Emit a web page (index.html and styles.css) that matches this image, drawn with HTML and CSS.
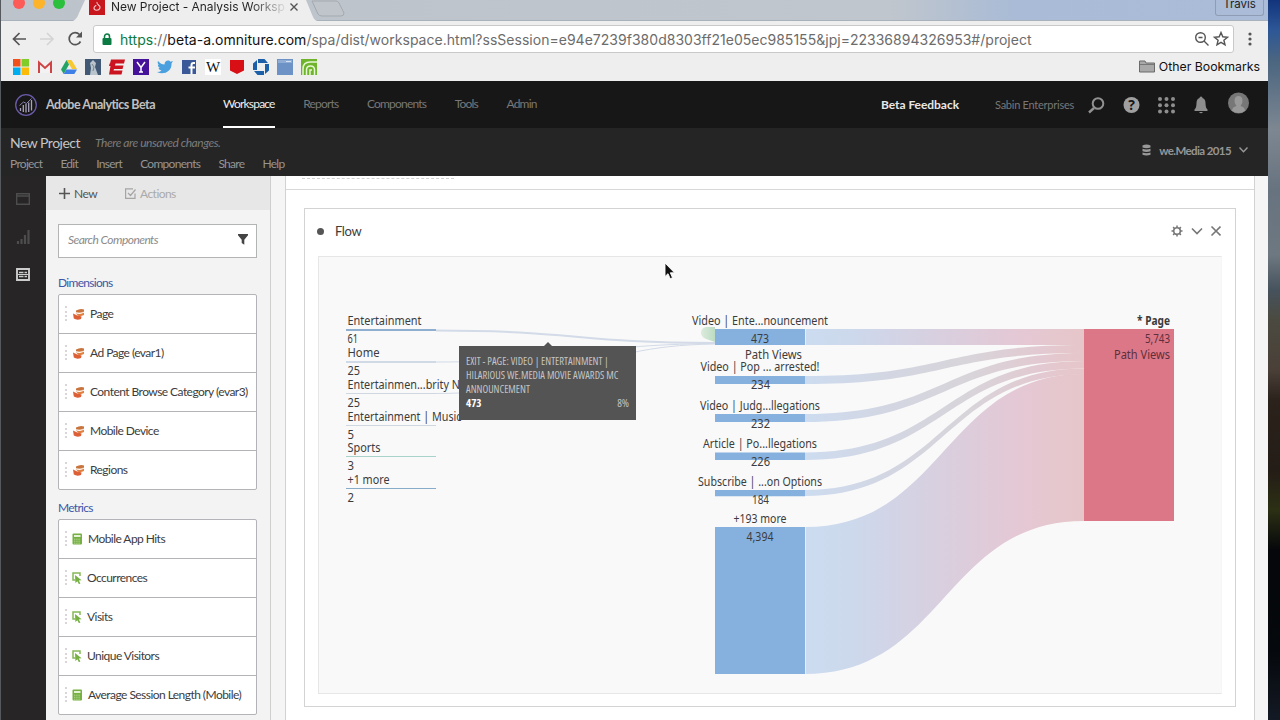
FILE: index.html
```
<!DOCTYPE html>
<html lang="en">
<head>
    <meta charset="UTF-8">
    <title>New Project - Analysis Workspace</title>
    <link rel="stylesheet" href="styles.css">
</head>
<body>
    <svg class="defs" width="0" height="0">
        <defs>
            <g id="icon-dimension">
                <path d="M3 2.6Q7 .2 11 1.4V4Q7 5.6 3 4.6z" fill="#c9743c"/>
                <path d="M2.6 5.2Q7 6.8 11 4.8V7Q8 8.6 5.6 8z" fill="#e2803f"/>
                <path d="M0 5.4Q3 7.4 8.6 8.6L8 11Q4 12.6 .8 10.6z" fill="#dd5f36"/>
                <path d="M3 4.600Q7 5.600 11 4" fill="none" stroke="#fff" stroke-width=".5"/>
            </g>
            <g id="icon-calc">
                <rect x=".5" y=".5" width="9.500" height="11" rx="1" fill="#76b043"/>
                <path d="M2 2h6.500v2H2z" fill="#e4f3d6"/>
                <path d="M2 6.2h6.500M2 8.2h6.500M2 10.2h6.500" stroke="#c3e2a4" stroke-width=".8" stroke-dasharray="1.4 .8"/>
            </g>
            <g id="icon-event">
                <path d="M3.4 8H1V1h7v3" fill="none" stroke="#86b95a" stroke-width="1.500"/>
                <path d="M3 3l6.600 5.200-2.800.3 1.600 3-1.500.7-1.500-3L3.400 11z" fill="#76b043"/>
            </g>
        </defs>
    </svg>

    <div class="browser">
        <!-- Tab strip -->
        <div class="tabstrip">
            <svg class="tab-shapes" width="1268" height="21" viewBox="0 0 1268 21">
                <circle cx="19" cy="3" r="6" fill="#fc5b57"/>
                <circle cx="39" cy="3" r="6" fill="#fdb32a"/>
                <circle cx="59" cy="3" r="6" fill="#2bc03c"/>
                <path d="M73 21Q77 19 79 13L85 0H306L313 17Q315 21 318 21z" fill="#eeeeee"/>
                <path d="M312 1H336Q338 1 339 3L344 13Q344 16 341 16H322Q319 16 318 14z" fill="#c0c5cb" stroke="#a4a9af"/>
                <path d="M89-1h16v16H89z" fill="#c8161d"/>
                <path d="M97 2c-1 3 4 3 3 6s-6 3-6 0c0-2 2-2 2-3" fill="none" stroke="#f7c9c9" stroke-width="1.100"/>
                <path d="M290.500 3.500l7 7m0-7l-7 7" stroke="#555" stroke-width="1.400"/>
            </svg>
            <span class="tab-title">New Project - Analysis Worksp</span>
            <span class="profile">Travis</span>
        </div>

        <!-- Address bar -->
        <div class="toolbar">
            <svg class="nav-icons" width="93" height="34" viewBox="0 0 93 34" fill="none" stroke-width="1.700">
                <path d="M26 18H14M19.500 12l-6 6 6 6" stroke="#555"/>
                <path d="M40 18h12M47 12l6 6-6 6" stroke="#d4d4d4"/>
                <path d="M80.500 20.500A6 6 0 1 1 79.500 13.500" stroke="#555"/>
                <path d="M82 10.500v6h-6z" fill="#555"/>
            </svg>
            <div class="address">
                <svg width="10" height="13" viewBox="0 0 10 13">
                    <rect x="0.500" y="5" width="9" height="7" rx="1" fill="#0b7a43"/>
                    <path d="M2.500 5V3.500a2.500 2.500 0 0 1 5 0V5" fill="none" stroke="#0b7a43" stroke-width="1.500"/>
                </svg>
                <span class="url"><span class="secure">https</span>://<b>beta-a.omniture.com</b>/spa/dist/workspace.html?ssSession=e94e7239f380d8303ff21e05ec985155&amp;jpj=22336894326953#/project</span>
                <svg class="address-icons" width="36" height="16" viewBox="0 0 36 16" fill="none" stroke="#555" stroke-width="1.400">
                    <circle cx="6.500" cy="6.500" r="4.800"/>
                    <path d="M10 10l4.500 4.500M4.500 6.500h4"/>
                    <path d="M27 1.500l1.800 4.300 4.700.4-3.600 3 1.100 4.600-4-2.500-4 2.500 1.100-4.600-3.600-3 4.700-.4z"/>
                </svg>
            </div>
            <svg class="kebab" width="6" height="16" viewBox="0 0 6 16" fill="#555">
                <circle cx="3" cy="3" r="1.600"/><circle cx="3" cy="8" r="1.600"/><circle cx="3" cy="13" r="1.600"/>
            </svg>
        </div>

        <!-- Bookmarks -->
        <div class="bookmarks">
            <svg viewBox="0 0 16 16"><path d="M0 0h7.500v7.500H0z" fill="#f1511b"/><path d="M8.500 0H16v7.500H8.500z" fill="#80cc28"/><path d="M0 8.500h7.500V16H0z" fill="#00adef"/><path d="M8.500 8.500H16V16H8.500z" fill="#fbbc09"/></svg>
            <svg viewBox="0 0 16 16"><path d="M1 3h14v11H1z" fill="#f2f2f2"/><path d="M2 14V3.500L8 9l6-5.500V14" fill="none" stroke="#cf4545" stroke-width="2"/></svg>
            <svg viewBox="0 0 16 16"><path d="M5.500 1h5L16 10h-5z" fill="#f8c832"/><path d="M5.500 1L0 10.500 2.700 15 8 5.500z" fill="#23a364"/><path d="M5.300 10.500H16L13.300 15H2.700z" fill="#3f7fe8"/></svg>
            <svg viewBox="0 0 16 16"><path d="M0 0h16v16H0z" fill="#415974"/><path d="M5 16l1-7-1-5 3-3 3 3-1 4 3 8z" fill="#b9c4cc"/><path d="M7 5l2 3-1 4" fill="none" stroke="#74858f"/></svg>
            <svg viewBox="0 0 16 16"><path d="M2 .5h14l-1 4H6.500L6 6.500h8.500l-1 3.500H5l-.5 1.500h9L12.500 15.500H0L1.500 7H0l.6-2.500H1z" fill="#cc1420"/></svg>
            <svg viewBox="0 0 16 16"><path d="M0 0h16v16H0z" fill="#44139a"/><path d="M4 3l4 5.500L12 3M8 8v5.500M6 13h4" fill="none" stroke="#fff" stroke-width="1.500"/></svg>
            <svg viewBox="0 0 16 16"><path d="M1 2q3 3.500 6.500 3.500C7.500 1 12 .5 13.500 2.700L16 2l-1.500 2.500C15 12 7 16.500 0 13q3 0 4.500-1.500Q2 11 1.500 9H3Q.8 8 .8 5.500L2 6Q0 4.500 1 2z" fill="#4aa0de"/></svg>
            <svg viewBox="0 0 16 16"><path d="M1 1h14v14H1z" fill="#3b5998"/><path d="M10.500 15V8M7.500 8.500H14M14 4h-1.500q-2 0-2 2v3" fill="none" stroke="#fff" stroke-width="2"/></svg>
            <svg viewBox="0 0 16 16"><path d="M0 0h16v16H0z" fill="#fff"/><text x="8" y="13" text-anchor="middle" class="wiki">W</text></svg>
            <svg viewBox="0 0 16 16"><path d="M1 1h14v10.500L8 15 1 11.500z" fill="#d90f16"/></svg>
            <svg viewBox="0 0 16 16" fill="#1b5fa9"><path d="M5 0h6.500L15 4H5zM16 5v6.500L12 15V5zM11 16H4.500L1 12h10zM0 11V4.500L4 1v10z"/></svg>
            <svg viewBox="0 0 16 16"><path d="M0 0h16v16H0z" fill="#6d93c6"/><path d="M1 1h14v3H1z" fill="#8fadd5"/><path d="M9 2.500h5" stroke="#d6e2f1"/></svg>
            <svg viewBox="0 0 16 16"><path d="M0 0h16v16H0z" fill="#6fb52c"/><path d="M2 16V10Q2 3 9 3h7M5.500 16v-5q0-4 4-4t4 4v5M9 16v-5h2" fill="none" stroke="#e7f5d8" stroke-width="1.500"/></svg>
            <div class="other">
                <svg viewBox="0 0 16 13"><path d="M.5 12V1H6l1 2h8.500v9z" fill="#a9a9a9" stroke="#6b6b6b"/><path d="M1 4.500h14" stroke="#777"/></svg>
                <span>Other Bookmarks</span>
            </div>
        </div>

        <!-- Analytics header -->
        <header class="header">
            <svg class="logo" width="22" height="22" viewBox="0 0 22 22" fill="none">
                <circle cx="11" cy="11" r="10.300" stroke="#6b5aa8" stroke-width="1.300"/>
                <path d="M5.500 17v-3M8.300 18v-7M11 18.500V10M13.700 18V8.500M16.500 16.500V6" stroke="#aaa2bd" stroke-width="1.300"/>
                <path d="M4.500 11.500l4-3.500 3 1.500 5-5" stroke="#8d82ad"/>
            </svg>
            <span class="brand">Adobe Analytics Beta</span>
            <nav class="main-nav">
                <a class="active">Workspace</a><a>Reports</a><a>Components</a><a>Tools</a><a>Admin</a>
            </nav>
            <span class="feedback">Beta Feedback</span>
            <span class="company">Sabin Enterprises</span>
            <svg class="header-icons" width="164" height="26" viewBox="0 0 164 26">
                <g fill="none" stroke="#919191" stroke-width="2"><circle cx="13" cy="12.500" r="5.300"/><path d="M9 17l-5 4.500" stroke-width="2.400"/></g>
                <circle cx="46.500" cy="14" r="8" fill="#a0a0a0"/>
                <text x="46.500" y="19" text-anchor="middle" class="help">?</text>
                <g fill="#8e8e8e">
                    <circle cx="75" cy="8" r="2"/><circle cx="81.500" cy="8" r="2"/><circle cx="88" cy="8" r="2"/>
                    <circle cx="75" cy="14.300" r="2"/><circle cx="81.500" cy="14.300" r="2"/><circle cx="88" cy="14.300" r="2"/>
                    <circle cx="75" cy="20.600" r="2"/><circle cx="81.500" cy="20.600" r="2"/><circle cx="88" cy="20.600" r="2"/>
                    <path d="M116 5.500q1.500 0 1.500 1.500 3 1 3 5 0 5 2 6.500v1.500h-13v-1.500q2-1.500 2-6.500 0-4 3-5 0-1.500 1.500-1.500zM114 21h4q-2 2.500-4 0z"/>
                </g>
                <circle cx="153.500" cy="12" r="10.500" fill="#777"/>
                <path d="M147 20q0-4 4.500-5-2.500-3-2-6 .5-4 4-4t4 4q.5 3-2 6 4.500 1 4.500 5-6 4-13 0z" fill="#999"/>
            </svg>
        </header>

        <!-- Project bar -->
        <div class="project-bar">
            <div>
                <div class="title-row"><span class="project-name">New Project</span><em>There are unsaved changes.</em></div>
                <div class="menu"><a>Project</a><a>Edit</a><a>Insert</a><a>Components</a><a>Share</a><a>Help</a></div>
            </div>
            <div class="suite">
                <svg width="9" height="12" viewBox="0 0 9 12" fill="#999"><path d="M.5 1.500q4-2 8 0v2q-4 1.500-8 0zM.5 4.800q4 1.500 8 0v2.400q-4 1.500-8 0zM.5 8.400q4 1.500 8 0v2.300q-4 1.500-8 0z"/></svg>
                <span>we.Media 2015</span>
                <svg width="9" height="6" viewBox="0 0 9 6" fill="none" stroke="#999" stroke-width="1.400"><path d="M.5.5l4 4.300 4-4.300"/></svg>
            </div>
        </div>

        <div class="workspace">
            <div class="rail">
                <svg width="14" height="12" viewBox="0 0 14 12" fill="none" stroke="#4d4d4d" stroke-width="1.400"><path d="M.7.7h12.600v10.600H.7zM1 3h12" /></svg>
                <svg width="14" height="15" viewBox="0 0 14 15" stroke="#4d4d4d" stroke-width="2.200"><path d="M2 15v-3M5.500 15v-5M9 15V6M12.500 15V1"/></svg>
                <svg width="14" height="13" viewBox="0 0 14 13" fill="none" stroke="#ccc"><path d="M1 1h12v11H1z" stroke-width="1.900"/><path d="M3 4.500h8M3 8.500h8" stroke-width="1.500" stroke-dasharray="4.500 1"/><path d="M2 6.500h10"/></svg>
            </div>

            <aside class="components">
                <div class="actions">
                    <svg width="11" height="11" viewBox="0 0 11 11" stroke="#555" stroke-width="1.600"><path d="M5.500 0v11M0 5.500h11"/></svg>
                    <span class="new">New</span>
                    <svg class="check" width="11" height="11" viewBox="0 0 11 11" fill="none" stroke="#a5a5a5" stroke-width="1.200"><path d="M10 5.500v4.900H.6V.9H8M3 5l2.500 2.500L10.500 1.500"/></svg>
                    <span class="disabled">Actions</span>
                </div>
                <div class="search">
                    <span>Search Components</span>
                    <svg width="10" height="11" viewBox="0 0 10 11" fill="#444"><path d="M0 0h10v1.200L6.300 5.800v5L3.700 9V5.800L0 1.200z"/></svg>
                </div>
                <h2>Dimensions</h2>
                <ul class="dimensions">
                    <li><i></i><svg viewBox="0 0 12 12"><use href="#icon-dimension"/></svg>Page</li>
                    <li><i></i><svg viewBox="0 0 12 12"><use href="#icon-dimension"/></svg>Ad Page (evar1)</li>
                    <li><i></i><svg viewBox="0 0 12 12"><use href="#icon-dimension"/></svg>Content Browse Category (evar3)</li>
                    <li><i></i><svg viewBox="0 0 12 12"><use href="#icon-dimension"/></svg>Mobile Device</li>
                    <li><i></i><svg viewBox="0 0 12 12"><use href="#icon-dimension"/></svg>Regions</li>
                </ul>
                <h2>Metrics</h2>
                <ul class="metrics">
                    <li class="calc"><i></i><svg viewBox="0 0 12 12"><use href="#icon-calc"/></svg>Mobile App Hits</li>
                    <li><i></i><svg viewBox="0 0 12 12"><use href="#icon-event"/></svg>Occurrences</li>
                    <li><i></i><svg viewBox="0 0 12 12"><use href="#icon-event"/></svg>Visits</li>
                    <li><i></i><svg viewBox="0 0 12 12"><use href="#icon-event"/></svg>Unique Visitors</li>
                    <li class="calc"><i></i><svg viewBox="0 0 12 12"><use href="#icon-calc"/></svg>Average Session Length (Mobile)</li>
                </ul>
            </aside>

            <main class="canvas">
                <div class="previous"><div class="dashes"></div></div>
                <section class="flow">
                    <div class="flow-head">
                        <span class="dot"></span>
                        <h3>Flow</h3>
                        <svg width="50" height="12" viewBox="0 0 50 12" fill="none" stroke="#767676" stroke-width="1.600">
                            <circle cx="6" cy="6" r="3.300"/>
                            <path d="M6 .5v2M6 9.500v2M.5 6h2M9.500 6h2M2.100 2.100l1.400 1.400M8.500 8.500l1.400 1.400M9.900 2.100L8.500 3.500M3.500 8.500L2.100 9.900" stroke-width="1.500"/>
                            <path d="M21 3.500l5 5 5-5M40.500 1.500l9 9m0-9l-9 9"/>
                        </svg>
                    </div>
                    <div class="chart">
                        <!-- viewBox keeps page units, 1 unit = 1px -->
                        <svg class="sankey" width="902" height="436" viewBox="319 257 902 436">
                            <defs>
                                <linearGradient id="ribbon" gradientUnits="userSpaceOnUse" x1="805" y1="0" x2="1084" y2="0">
                                    <stop offset="0" stop-color="#ccdcf0"/>
                                    <stop offset=".15" stop-color="#ccd9ed"/>
                                    <stop offset=".45" stop-color="#d7d0e0"/>
                                    <stop offset=".75" stop-color="#e4c8d5"/>
                                    <stop offset="1" stop-color="#e6c6c9"/>
                                </linearGradient>
                                <linearGradient id="thin" gradientUnits="userSpaceOnUse" x1="805" y1="0" x2="1084" y2="0">
                                    <stop offset="0" stop-color="#cddcf0"/>
                                    <stop offset=".3" stop-color="#d3d6e2"/>
                                    <stop offset=".6" stop-color="#d8d4d9"/>
                                    <stop offset=".85" stop-color="#e3c9d1"/>
                                    <stop offset="1" stop-color="#e6c6c9"/>
                                </linearGradient>
                                <linearGradient id="exit" x1="0" y1="0" x2="1" y2="0">
                                    <stop offset="0" stop-color="#dcebdd"/>
                                    <stop offset="1" stop-color="#bcdcc2"/>
                                </linearGradient>
                            </defs>

                            <!-- Flows into the page -->
                            <g fill="none" stroke="#d3dbe8">
                                <path d="M436 330.500C576 330.500 576 343 715 343" stroke-width="2"/>
                                <path d="M436 362C576 362 576 345 715 343.500"/>
                                <path d="M436 393.500C576 393.500 576 346 715 344"/>
                            </g>
                            <path d="M715 327H706Q701 328 701 333T709 340L715 342z" fill="url(#exit)"/>

                            <g fill="url(#ribbon)">
                                <path d="M805 329H1084V345H805z"/>
                                <path d="M805 527C944.500 527 944.500 374 1084 374V521C944.500 521 944.500 674 805 674z"/>
                            </g>
                            <g fill="url(#thin)">
                                <path d="M805 376C944.500 376 944.500 345 1084 345V353C944.500 353 944.500 384 805 384z"/>
                                <path d="M805 414C944.500 414 944.500 353 1084 353V361C944.500 361 944.500 422 805 422z"/>
                                <path d="M805 452.500C944.500 452.500 944.500 361 1084 361V368.500C944.500 368.500 944.500 460 805 460z"/>
                                <path d="M805 490C944.500 490 944.500 368.500 1084 368.500V374.500C944.500 374.500 944.500 496 805 496z"/>
                            </g>

                            <g fill="#86b1df">
                                <path d="M715 329h90v16h-90zM715 376h90v8h-90zM715 414h90v8h-90zM715 452.500h90v7.500h-90zM715 490h90v6.300h-90zM715 527h90v147h-90z"/>
                            </g>
                            <path d="M805.500 329v16M805.500 527v147" stroke="#e6edf6"/>
                            <path d="M1084 329h90v192h-90z" fill="#dc7788"/>

                            <g fill="none">
                                <path d="M346 330h90" stroke="#8fafd0" stroke-width="2"/>
                                <path d="M346 362h90" stroke="#c0cfdf" stroke-width="1.500"/>
                                <path d="M346 393.500h90M346 425.500h90" stroke="#cfd8e0"/>
                                <path d="M346 456.500h90" stroke="#a9d2cb"/>
                                <path d="M346 488.500h90" stroke="#87abc9" stroke-width="1.200"/>
                            </g>

                            <g class="label">
                                <text x="347.500" y="324.500" textLength="74" lengthAdjust="spacingAndGlyphs">Entertainment</text>
                                <text x="347.500" y="342.500" textLength="10.500" lengthAdjust="spacingAndGlyphs">61</text>
                                <text x="347.500" y="357" textLength="32" lengthAdjust="spacingAndGlyphs">Home</text>
                                <text x="347.500" y="375" textLength="12.500" lengthAdjust="spacingAndGlyphs">25</text>
                                <text x="347.500" y="389" textLength="132" lengthAdjust="spacingAndGlyphs">Entertainmen...brity News</text>
                                <text x="347.500" y="407" textLength="12.500" lengthAdjust="spacingAndGlyphs">25</text>
                                <text x="347.500" y="420.500" textLength="114" lengthAdjust="spacingAndGlyphs">Entertainment | Music</text>
                                <text x="347.500" y="438.500" textLength="6.500" lengthAdjust="spacingAndGlyphs">5</text>
                                <text x="347.500" y="452" textLength="33" lengthAdjust="spacingAndGlyphs">Sports</text>
                                <text x="347.500" y="470" textLength="6.500" lengthAdjust="spacingAndGlyphs">3</text>
                                <text x="347.500" y="483.500" textLength="42" lengthAdjust="spacingAndGlyphs">+1 more</text>
                                <text x="347.500" y="501.500" textLength="6.500" lengthAdjust="spacingAndGlyphs">2</text>
                            </g>
                            <g class="label">
                                <text x="692" y="324.500" textLength="136" lengthAdjust="spacingAndGlyphs">Video | Ente...nouncement</text>
                                <text x="751" y="342.500" textLength="18" lengthAdjust="spacingAndGlyphs">473</text>
                                <text x="745" y="358.500" textLength="57" lengthAdjust="spacingAndGlyphs">Path Views</text>
                                <text x="700.500" y="371" textLength="119" lengthAdjust="spacingAndGlyphs">Video | Pop ... arrested!</text>
                                <text x="751" y="389" textLength="19" lengthAdjust="spacingAndGlyphs">234</text>
                                <text x="700" y="409.500" textLength="120" lengthAdjust="spacingAndGlyphs">Video | Judg...llegations</text>
                                <text x="751" y="427.500" textLength="19" lengthAdjust="spacingAndGlyphs">232</text>
                                <text x="703" y="448" textLength="114" lengthAdjust="spacingAndGlyphs">Article | Po...llegations</text>
                                <text x="751" y="466" textLength="19" lengthAdjust="spacingAndGlyphs">226</text>
                                <text x="698" y="486" textLength="124" lengthAdjust="spacingAndGlyphs">Subscribe | ...on Options</text>
                                <text x="752" y="504" textLength="17" lengthAdjust="spacingAndGlyphs">184</text>
                                <text x="733.500" y="523" textLength="53" lengthAdjust="spacingAndGlyphs">+193 more</text>
                                <text x="746.500" y="541" textLength="27" lengthAdjust="spacingAndGlyphs">4,394</text>
                            </g>
                            <g class="label">
                                <text x="1137" y="324.500" textLength="33" lengthAdjust="spacingAndGlyphs" class="bold">* Page</text>
                                <text x="1145" y="342.500" textLength="25" lengthAdjust="spacingAndGlyphs" class="on-red">5,743</text>
                                <text x="1114" y="358.500" textLength="56" lengthAdjust="spacingAndGlyphs" class="on-red">Path Views</text>
                            </g>
                        </svg>

                        <div class="tooltip">
                            <p>EXIT - PAGE: VIDEO | ENTERTAINMENT |<br>HILARIOUS WE.MEDIA MOVIE AWARDS MC<br>ANNOUNCEMENT</p>
                            <div class="tooltip-values"><b>473</b><span>8%</span></div>
                        </div>
                    </div>
                </section>
            </main>
        </div>
    </div>

    <svg class="cursor" width="12" height="18" viewBox="0 0 12 18"><path d="M1 1v13.500l3-2.800 2.200 5 2.300-1-2.200-4.900h4.200z" fill="#111" stroke="#fff" stroke-width=".9"/></svg>
</body>
</html>
```
FILE: styles.css
```
* {
    box-sizing: border-box;
}
body {
    margin: 0;
    height: 720px;
    overflow: hidden;
    font-family: Lato, "Noto Sans", sans-serif;
    font-size: 12px;
    letter-spacing: -0.55px;
    color: #3c3c3c;
    background: linear-gradient(#12347c 0, #2d5796 30px, #4a6580 60px, #7d8791 130px, #67737f 190px, #6d7880 255px, #46525c 290px, #4b4a40 320px, #4a4038 370px, #2b221c 400px, #241c16 470px, #2c3014 510px, #05070a 550px, #05080c 650px, #141a24 720px);
}
.defs {
    position: absolute;
}
.browser {
    display: flex;
    flex-direction: column;
    width: 1268px;
    height: 720px;
    border-left: 1px solid #55585c;
    background: #fff;
}

/* browser window */
.tabstrip {
    position: relative;
    flex: none;
    display: flex;
    height: 21px;
    font-family: Inter, sans-serif;
    background: linear-gradient(90deg, #bcc3cb 0, #c0c6cd 70%, #a9bbd6 80%, #aabcd7 100%);
    border-bottom: 1px solid #a9b1ba;
}
.tab-shapes {
    position: absolute;
    left: -1px;
    top: 0;
}
.tab-title {
    position: relative;
    margin-left: 110px;
    width: 174px;
    height: 20px;
    overflow: hidden;
    white-space: nowrap;
    line-height: 14px;
    font-size: 12px;
    letter-spacing: -0.050px;
    color: transparent;
    background: linear-gradient(90deg, #222 80%, #ddd);
    background-clip: text;
}
.profile {
    margin-left: auto;
    margin-right: 4px;
    width: 49px;
    height: 16px;
    line-height: 8px;
    text-align: center;
    font-size: 11.500px;
    letter-spacing: 0;
    color: #222;
    border: 1px solid #8e9db3;
    border-top: 0;
    border-radius: 0 0 3px 3px;
}
.toolbar {
    flex: none;
    display: flex;
    align-items: center;
    height: 34px;
    background: #eee;
}
.nav-icons {
    flex: none;
    margin-left: -1px;
}
.address {
    display: flex;
    align-items: center;
    width: 1141px;
    height: 28px;
    margin-top: 2px;
    padding: 0 3px 0 8px;
    background: #fff;
    border: 1px solid #c9c9c9;
    border-radius: 3px;
}
.address svg {
    flex: none;
}
.url {
    margin-left: 8px;
    white-space: nowrap;
    font-family: Inter, sans-serif;
    font-size: 14px;
    letter-spacing: 0.020px;
    color: #6c6c6c;
}
.url b {
    font-weight: 400;
    color: #111;
}
.secure {
    color: #0b7a43;
}
.address-icons {
    margin-left: auto;
}
.kebab {
    margin: 2px 0 0 13px;
}
.bookmarks {
    flex: none;
    display: flex;
    align-items: center;
    gap: 8px;
    height: 26px;
    padding: 0 8px 3px 12px;
    background: #eee;
}
.bookmarks svg {
    width: 16px;
    height: 16px;
}
.wiki {
    font: 15px "Liberation Serif", serif;
    letter-spacing: 0;
    fill: #111;
}
.other {
    display: flex;
    align-items: center;
    gap: 4px;
    margin-left: auto;
    font-family: Inter, sans-serif;
    font-size: 12.300px;
    letter-spacing: 0;
    color: #111;
}
.other svg {
    height: 13px;
}

/* analytics header */
.header {
    flex: none;
    display: flex;
    align-items: center;
    height: 47px;
    padding: 0 19px 0 14px;
    background: #171717;
}
.brand {
    width: 177px;
    margin-left: 9px;
    font-size: 12.500px;
    font-weight: 700;
    letter-spacing: -0.5px;
    color: #c0c0c0;
}
.main-nav {
    display: flex;
    gap: 28.500px;
    height: 47px;
    line-height: 45px;
    letter-spacing: -0.8px;
    color: #777;
}
.main-nav .active {
    color: #eee;
    border-bottom: 2px solid #fff;
}
.feedback {
    margin-left: auto;
    margin-right: 36px;
    font-weight: 700;
    letter-spacing: -0.05px;
    color: #e8e8e8;
}
.company {
    margin-right: 11px;
    font-size: 11px;
    letter-spacing: -0.250px;
    color: #777;
}
.header-icons {
    margin-top: -2px;
}
.project-bar {
    flex: none;
    display: flex;
    justify-content: space-between;
    height: 48px;
    padding: 3px 20px 0 9px;
    background: #252525;
    color: #959595;
}
.title-row {
    display: flex;
    align-items: center;
    gap: 17px;
    height: 22px;
}
.title-row em {
    margin-left: -2px;
    letter-spacing: -0.450px;
    color: #7c7c7c;
}
.project-name {
    font-size: 14px;
    letter-spacing: -0.5px;
    color: #c4c4c4;
}
.menu {
    display: flex;
    gap: 18px;
    height: 22px;
    line-height: 22px;
    letter-spacing: -0.700px;
}
.suite {
    display: flex;
    align-items: center;
    gap: 8px;
    height: 38px;
    font-weight: 700;
    font-size: 11.500px;
    letter-spacing: -0.600px;
}

.workspace {
    display: flex;
    flex: 1;
    min-height: 0;
}
.rail {
    display: flex;
    flex-direction: column;
    align-items: center;
    gap: 24px;
    width: 45px;
    padding: 17px 2px 0 0;
    background: #272526;
}

/* component panel */
.components {
    width: 225px;
    background: #f3f3f3;
    border-right: 1px solid #cfcfcf;
}
.actions {
    display: flex;
    align-items: center;
    height: 34px;
    padding: 1px 0 0 13px;
    background: #e7e7e7;
}
.new {
    margin-left: 4px;
    color: #555;
}
.check {
    margin: 0 4px 0 28px;
}
.disabled {
    color: #aaa;
}
.search {
    display: flex;
    align-items: center;
    justify-content: space-between;
    width: 199px;
    height: 34px;
    margin: 14px 0 7px 12px;
    padding: 0 8px 3px 9px;
    background: #fff;
    border: 1px solid #b3b5b5;
    font-style: italic;
    color: #8b8b8b;
}
.components h2 {
    height: 29px;
    margin: 0 0 0 12px;
    padding-top: 7px;
    line-height: 22px;
    font-weight: 400;
    font-size: 12px;
    letter-spacing: -0.700px;
    color: #3c57a8;
}
.components ul {
    width: 199px;
    margin: 0 0 0 12px;
    padding: 0;
    list-style: none;
    background: #fff;
    border: 1px solid #b4b4b8;
    border-radius: 2px;
}
.components li {
    display: flex;
    align-items: center;
    height: 39px;
    padding: 0 0 2px 6px;
    white-space: nowrap;
    border-bottom: 1px solid #b4b4b8;
}
.components li:last-child {
    height: 38px;
    border-bottom: 0;
}
.components li i {
    height: 15px;
    border-left: 2px dotted #d9d5d9;
}
.components li svg {
    width: 12px;
    height: 12px;
    margin: 1px 5px 0 6px;
}
.metrics li svg {
    margin-left: 5px;
    margin-right: 3px;
}
.metrics .calc svg {
    margin-right: 4px;
}

/* canvas */
.canvas {
    flex: 1;
    margin: 0 13px 0 14px;
    border: 1px solid #d2d2d2;
    border-width: 0 1px;
    outline: 14px solid #f5f5f5;
    clip-path: inset(0 -13px 0 -14px);
}
.rail,
.components {
    position: relative;
    z-index: 1;
    flex: none;
}
.previous {
    height: 14px;
    border-bottom: 1px solid #d8d8d8;
}
.dashes {
    width: 152px;
    margin-left: 16px;
    height: 3px;
    border-bottom: 1px dashed #d0d0d0;
}
.flow {
    width: 932px;
    height: 499px;
    margin: 18px 0 0 18px;
    border: 1px solid #d3d3d3;
}
.flow-head {
    display: flex;
    align-items: center;
    height: 47px;
    padding: 0 14px 3px 12px;
}
.flow-head svg {
    margin-left: auto;
    margin-top: -1px;
}
.dot {
    width: 7px;
    height: 7px;
    margin-top: 1px;
    border-radius: 50%;
    background: #555;
}
.flow-head h3 {
    margin: 0 0 0 11px;
    font-weight: 400;
    font-size: 13px;
    letter-spacing: -0.4px;
}
.chart {
    position: relative;
    width: 904px;
    height: 438px;
    margin-left: 13px;
    background: #f9f9f9;
    border: 1px solid #e6e6e6;
    border-right-color: #f6f6f6;
}
.sankey {
    display: block;
}
.label {
    font-family: "Noto Sans", sans-serif;
    font-size: 12px;
    letter-spacing: 0;
    fill: #3c3c3c;
}
.bold {
    font-weight: 700;
}
.on-red {
    fill: #5c2f3a;
}
.tooltip {
    position: absolute;
    left: 140px;
    top: 89px;
    width: 177px;
    height: 74px;
    padding: 8px 7px 0;
    background: #545454;
    color: #c4c4c4;
    font-family: "Open Sans", sans-serif;
    font-stretch: 75%;
    font-size: 10.500px;
    line-height: 14px;
    letter-spacing: 0;
    white-space: nowrap;
}
.tooltip::before {
    content: "";
    position: absolute;
    left: 85px;
    top: -4px;
    border: 4px solid transparent;
    border-top: 0;
    border-bottom-color: #545454;
}
.tooltip p {
    margin: 0;
}
.tooltip-values {
    display: flex;
    justify-content: space-between;
    font-size: 11px;
}
.tooltip-values b {
    color: #fff;
}
.cursor {
    position: absolute;
    left: 664px;
    top: 262px;
}
.help {
    font: 700 14px "Open Sans", sans-serif;
    letter-spacing: 0;
    fill: #171717;
}
```
